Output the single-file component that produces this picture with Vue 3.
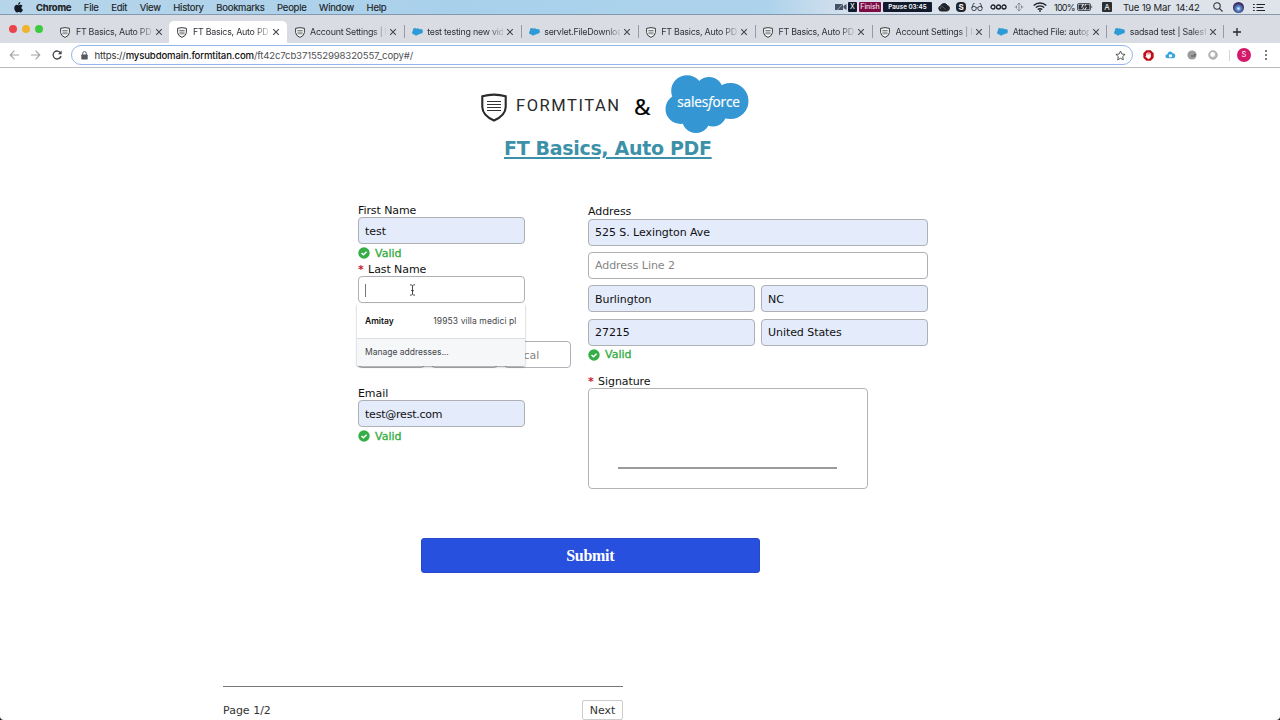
<template>
  <div class="screen">
    <header class="menubar">
      <svg class="apple" viewBox="0 0 18 22">
        <path
          d="M12.6 0c.1 1.7-.5 3-1.4 4C10.300 5 9.200 5.500 8.200 5.400 8.100 3.900 8.700 2.700 9.500 1.700 10.300.800 11.500.100 12.600 0zM9.300 6.500c.8 0 2-1.100 4-1.100 1.600 0 3 .8 3.800 2-3.400 2-2.800 6.700.8 8-.8 2.300-2.700 5.700-4.700 5.700-1.500 0-1.900-.9-3.700-.9s-2.300.9-3.700.9C3.300 21.100.500 16.500.500 12.200.500 8 3 5.500 5.700 5.500c1.600 0 2.700 1 3.600 1z"
        />
      </svg>
      <nav class="menu">
        <span v-for="item in menu" :key="item">{{ item }}</span>
      </nav>
      <div class="status">
        <svg class="camera" viewBox="0 0 12 10">
          <path d="M0 2h8v6H0zM8.500 4l3-2v6l-3-2z" fill="#465366" />
          <path d="M1 9.500L9 .5" stroke="#b8c3d2" stroke-width=".7" />
        </svg>
        <span class="badge badge-x">X</span>
        <span class="badge badge-finish">Finish</span>
        <span class="badge badge-pause">Pause 03:45</span>
        <svg class="s-cloud" viewBox="0 0 12 10">
          <path
            d="M3 9a2.600 2.600 0 0 1-.3-5.100A3.600 3.600 0 0 1 9.300 3.500 2.800 2.800 0 0 1 9 9z"
            fill="#20242c"
            stroke="#20242c"
          />
          <path d="M2.500 7c-.3-2.200 2-3 3.200-1.500l2 2" fill="none" stroke="#aab" stroke-width=".4" />
        </svg>
        <span class="skype">S</span>
        <svg class="s-glasses" viewBox="0 0 12 10">
          <g fill="none" stroke="#333946" stroke-width=".9">
            <circle cx="3" cy="6.500" r="2.200" />
            <circle cx="9" cy="6.500" r="2.200" />
            <path d="M5 6c.6-.5 1.400-.5 2 0M.8 6L2.500 1.500h1M11.200 6L9.500 1.500h-1" />
          </g>
        </svg>
        <svg class="s-dots" viewBox="0 0 17 8">
          <g fill="none" stroke="#1d2027" stroke-width="1.300">
            <circle cx="3" cy="4" r="2" />
            <circle cx="8.500" cy="4" r="2" />
            <circle cx="14" cy="4" r="2" />
          </g>
        </svg>
        <svg class="s-sync" viewBox="0 0 10 10">
          <path
            d="M5 1v8M3.500 2.500L5 1l1.500 1.500M3.500 7.500L5 9l1.500-1.500M2.500 3.500v3M7.500 3.500v3M1.200 4.400v1.200M8.800 4.400v1.200"
            fill="none"
            stroke="#85898f"
            stroke-width="1"
          />
        </svg>
        <svg class="s-wifi" viewBox="0 0 14 10">
          <g fill="none" stroke="#1f2228" stroke-width="1.400">
            <path d="M.7 3.500a9 9 0 0 1 12.600 0M2.800 5.600a6 6 0 0 1 8.400 0M4.800 7.600a3.100 3.100 0 0 1 4.400 0" />
          </g>
          <circle cx="7" cy="9" r=".9" fill="#1f2228" />
        </svg>
        <span class="percent">100%</span>
        <svg class="s-battery" viewBox="0 0 16 8">
          <rect x=".5" y=".5" width="13" height="7" rx="1.200" fill="none" stroke="#2b2d33" stroke-width=".8" />
          <path d="M1.500 1.500h4L4 4.500h2L5.500 6.500h-4zM9 1.500h3.500v5h-4L10 4H8zM14.500 2.700c1 .4 1 2.200 0 2.600z" fill="#2b2d33" />
          <path d="M8 0L5 4.500h2L6 8l3.500-4.500h-2z" fill="#2b2d33" />
        </svg>
        <span class="keyboard">A</span>
        <span class="clock">Tue 19 Mar&nbsp; 14:42</span>
        <svg class="s-search" viewBox="0 0 10 10">
          <g fill="none" stroke="#30323a" stroke-width="1.100">
            <circle cx="4" cy="4" r="3.200" />
            <path d="M6.400 6.400l3.100 3.100" />
          </g>
        </svg>
        <span class="siri"></span>
        <svg class="s-list" viewBox="0 0 12 9">
          <path d="M3.500 1.500H12M3.500 4.500h7M3.500 7.500H12M0 1.500h1.700M0 4.500h1.700M0 7.500h1.700" stroke="#1f2127" stroke-width="1.200" />
        </svg>
      </div>
    </header>

    <div class="tabstrip">
      <div class="lights"><i class="red"></i><i class="yellow"></i><i class="green"></i></div>
      <div
        v-for="(tab, index) in tabs"
        :key="index"
        class="tab"
        :class="{ active: index === 1, divided: index > 1 }"
      >
        <svg v-if="tab.icon === 'shield'" class="favicon" viewBox="0 0 26 29">
          <path d="M1.500 3.500Q13 0 24.500 3.500V15Q24 23 13 27.500 2 23 1.500 15z" fill="#fff" stroke="#33353a" stroke-width="2.600" />
          <path d="M6 9h14M6 13.500h14M6 18h14" stroke="#44474d" stroke-width="2" />
        </svg>
        <svg v-else class="favicon cloud" viewBox="0 0 84 60">
          <path :d="cloudPath" fill="#2e9bd6" />
        </svg>
        <span class="tab-title">{{ tab.title }}</span>
        <svg class="close" viewBox="0 0 8 8"><path d="M1.200 1.200l5.600 5.600M6.800 1.200L1.200 6.800" /></svg>
      </div>
      <svg class="new-tab" viewBox="0 0 10 10"><path d="M5 1v8M1 5h8" /></svg>
    </div>

    <div class="toolbar">
      <svg class="nav-icon back" viewBox="0 0 10 10"><path d="M10 5H1M5.500.7L1.200 5l4.300 4.300" /></svg>
      <svg class="nav-icon forward" viewBox="0 0 10 10"><path d="M0 5h9M4.500.7L8.800 5 4.500 9.300" /></svg>
      <svg class="nav-icon reload" viewBox="0 0 10 10">
        <path d="M8.600 3A4 4 0 1 0 9 6" />
        <path d="M9.600.5v3.700H5.900z" class="tip" />
      </svg>
      <div class="omnibox">
        <svg class="lock" viewBox="0 0 7 9">
          <rect x=".3" y="3.500" width="6.400" height="5" rx=".7" fill="#55585e" />
          <path d="M1.700 4V2.400a1.800 1.800 0 0 1 3.600 0V4" fill="none" stroke="#55585e" />
        </svg>
        <div class="url">https://<b>mysubdomain.formtitan.com</b><em>/ft42c7cb371552998320557_copy#/</em></div>
        <svg class="star" viewBox="0 0 12 12">
          <path d="M6 1.200l1.500 3.200 3.500.4-2.600 2.400.7 3.500L6 9l-3.100 1.700.7-3.500L1 4.800l3.500-.4z" fill="none" stroke="#45484d" />
        </svg>
      </div>
      <svg class="ext adblock" viewBox="0 0 12 12">
        <path d="M3.600.4h4.800l3.200 3.200v4.800l-3.200 3.200H3.600L.4 8.400V3.600z" fill="#c00d18" />
        <path d="M4 6V3.500M5.300 6V2.500M6.700 6V2.500M8 6V3.500M4 5.500h4v2.500q-2 2.500-3.500.5L3 6.800" stroke="#fff" stroke-width="1" fill="#fff" />
      </svg>
      <svg class="ext ext-cloud" viewBox="0 0 12 10">
        <path d="M2.500 8.500a2.200 2.200 0 0 1 .2-4.400A3 3 0 0 1 8.500 3a2.800 2.800 0 0 1 .7 5.500z" fill="#36a6de" />
        <rect x="4.300" y="4.500" width="3.400" height="3" rx="1" fill="#fff" />
      </svg>
      <svg class="ext ext-grey" viewBox="0 0 10 10">
        <circle cx="5" cy="5" r="4.600" fill="#9b9c9e" />
        <path d="M4 6h4M7 4l2 1" stroke="#55575b" />
      </svg>
      <svg class="ext ext-ring" viewBox="0 0 10 10">
        <circle cx="5" cy="5" r="4.200" fill="#b9babc" stroke="#98999b" stroke-width=".8" />
        <circle cx="4.600" cy="4.500" r="2.400" fill="#fff" />
      </svg>
      <span class="separator"></span>
      <span class="avatar">S</span>
      <svg class="more" viewBox="0 0 4 12">
        <g fill="#505257"><circle cx="2" cy="2" r="1" /><circle cx="2" cy="6" r="1" /><circle cx="2" cy="10" r="1" /></g>
      </svg>
    </div>

    <main class="page">
      <div class="brand">
        <svg class="shield" viewBox="0 0 26 29">
          <path d="M1.300 3.300Q13 0 24.700 3.300V14Q24.500 22.500 13 27.500 1.500 22.500 1.300 14z" fill="#fff" stroke="#2a2a2a" stroke-width="2.100" />
          <path d="M6 8.500h14M6 11.500h14M6 14.500h14M6 17.500h14" stroke="#333" stroke-width="1.200" />
        </svg>
        <span class="brand-name">FORMTITAN</span>
        <span class="amp">&amp;</span>
        <div class="salesforce">
          <svg viewBox="0 0 84 60"><path :d="cloudPath" fill="#3497d3" /></svg>
          <span>sales<i>f</i>orce</span>
        </div>
      </div>
      <h1>FT Basics, Auto PDF</h1>

      <div class="form">
        <section class="left">
          <label>First Name</label>
          <input class="field filled" value="test" />
          <p class="valid"><svg viewBox="0 0 12 12"><circle cx="6" cy="6" r="5.700" /><path d="M3.500 6l1.900 1.800 3.200-3.100" /></svg>Valid</p>
          <label><sup>*</sup> Last Name</label>
          <div class="combo">
            <div class="field empty">
              <span class="caret"></span>
              <svg class="ibeam" viewBox="0 0 7 12">
                <path d="M1 .8q2 0 2.500 1Q4 .8 6 .8M3.500 1.500v9M1 11.200q2 0 2.500-1 .5 1 2.500 1M2.200 6.500h2.600" />
              </svg>
            </div>
            <div class="autofill">
              <div class="suggestion"><b>Amitay</b><span>19953 villa medici pl</span></div>
              <div class="manage">Manage addresses...</div>
            </div>
          </div>
          <div class="phone">
            <div class="field"></div>
            <div class="field"></div>
            <input class="field" placeholder="Local" />
          </div>
          <label>Email</label>
          <input class="field filled email" value="test@rest.com" />
          <p class="valid"><svg viewBox="0 0 12 12"><circle cx="6" cy="6" r="5.700" /><path d="M3.500 6l1.900 1.800 3.200-3.100" /></svg>Valid</p>
        </section>

        <section class="right">
          <label>Address</label>
          <div class="address">
            <input class="field filled wide" value="525 S. Lexington Ave" />
            <input class="field wide" placeholder="Address Line 2" />
            <input class="field filled" value="Burlington" />
            <input class="field filled" value="NC" />
            <input class="field filled" value="27215" />
            <input class="field filled" value="United States" />
          </div>
          <p class="valid"><svg viewBox="0 0 12 12"><circle cx="6" cy="6" r="5.700" /><path d="M3.500 6l1.900 1.800 3.200-3.100" /></svg>Valid</p>
          <label class="signature-label"><sup>*</sup> Signature</label>
          <div class="signature"><span></span></div>
        </section>
      </div>

      <button class="submit">Submit</button>

      <footer class="pager">
        <span>Page 1/2</span>
        <button>Next</button>
      </footer>
    </main>
  </div>
</template>

<script setup>
const menu = ["Chrome", "File", "Edit", "View", "History", "Bookmarks", "People", "Window", "Help"];

const tabs = [
  { icon: "shield", title: "FT Basics, Auto PDF" },
  { icon: "shield", title: "FT Basics, Auto PDF" },
  { icon: "shield", title: "Account Settings | F" },
  { icon: "cloud", title: "test testing new vid" },
  { icon: "cloud", title: "servlet.FileDownloa" },
  { icon: "shield", title: "FT Basics, Auto PDF" },
  { icon: "shield", title: "FT Basics, Auto PDF" },
  { icon: "shield", title: "Account Settings | F" },
  { icon: "cloud", title: "Attached File: autop" },
  { icon: "cloud", title: "sadsad test | Salesf" },
];

// cloud built from overlapping lobes: [cx, cy, r]
const lobes = [
  [22, 16, 15.8],
  [44, 16, 14],
  [65.5, 26, 18],
  [15.5, 34, 15],
  [31, 44, 14],
  [48, 38, 13.5],
];
const cloudPath =
  lobes.map(([x, y, r]) => `M${x - r} ${y}a${r} ${r} 0 1 1 ${2 * r} 0a${r} ${r} 0 1 1 ${-2 * r} 0z`).join("") +
  "M18 16H60V42H18z";
</script>

<style>
body {
  margin: 0;
  overflow: hidden;
  background: #17181c;
}
</style>

<style scoped>
* {
  box-sizing: border-box;
}

svg {
  display: block;
  flex: none;
}

.screen {
  width: 1280px;
  height: 720px;
  overflow: hidden;
  background: #fff;
  border-radius: 0 0 4px 4px;
  font-family: Inter, "Noto Sans", sans-serif;
  color: #1c1f26;
}

/* macOS menu bar */
.menubar {
  height: 15px;
  display: flex;
  align-items: center;
  padding-left: 14px;
  background: linear-gradient(90deg, #b7d5ea 0, #a9d0eb 35%, #add3ec 60%, #dbe2ec 67%, #dfe3ea 100%);
  border-bottom: 1px solid #8499ae;
  font-size: 10px;
}

.apple {
  width: 9px;
  height: 11px;
  margin-right: 13px;
  fill: #141a24;
}

.menu {
  display: flex;
  gap: 12.600px;
  font-size: 9.500px;
  letter-spacing: -0.250px;
  white-space: nowrap;
  -webkit-text-stroke: 0.150px #1c1f26;
}

.menu span:first-child {
  font-weight: 700;
}

.status {
  display: flex;
  align-items: center;
  margin-left: auto;
  padding-right: 15px;
  white-space: nowrap;
}

.camera {
  width: 12px;
  height: 10px;
  margin-right: 1px;
}

.badge {
  height: 10px;
  line-height: 10px;
  border-radius: 1px;
  color: #fff;
  background: #111b2d;
  font-size: 7px;
  text-align: center;
}

.badge-x {
  width: 9px;
  margin-right: 2px;
}

.badge-finish {
  width: 22px;
  margin-right: 2px;
  background: #7d0b46;
}

.badge-pause {
  width: 49px;
  margin-right: 6px;
  font-size: 6.300px;
  font-weight: 600;
}

.s-cloud {
  width: 12px;
  height: 10px;
  margin-right: 6px;
}

.skype {
  width: 10px;
  height: 10px;
  margin-right: 5px;
  border-radius: 4px;
  background: #20232a;
  color: #fff;
  font-size: 8px;
  font-weight: 700;
  line-height: 10px;
  text-align: center;
}

.s-glasses {
  width: 12px;
  height: 10px;
  margin-right: 7px;
}

.s-dots {
  width: 17px;
  height: 8px;
  margin-right: 7px;
}

.s-sync {
  width: 10px;
  height: 10px;
  margin-right: 9px;
}

.s-wifi {
  width: 14px;
  height: 10px;
  margin-right: 7px;
}

.percent {
  width: 21px;
  margin-right: 2px;
  font-size: 9px;
  letter-spacing: -0.750px;
}

.s-battery {
  width: 16px;
  height: 8px;
  margin-right: 9px;
}

.keyboard {
  width: 10px;
  height: 10px;
  margin-right: 11px;
  border-radius: 1px;
  background: #2c2d31;
  color: #fff;
  font-size: 8px;
  line-height: 10px;
  text-align: center;
}

.clock {
  width: 77px;
  margin-right: 13px;
  font-size: 9.600px;
  letter-spacing: -0.200px;
}

.s-search {
  width: 10px;
  height: 10px;
  margin-right: 10px;
}

.siri {
  width: 11px;
  height: 11px;
  margin-right: 9px;
  border-radius: 50%;
  background: radial-gradient(circle at 50% 60%, #e6f1fa 0, #5a8ed0 25%, #3b2f68 60%, #20203a 100%);
}

.s-list {
  width: 12px;
  height: 9px;
}

/* browser window */
.tabstrip {
  height: 28px;
  display: flex;
  align-items: center;
  background: #dadce3;
}

.lights {
  width: 52.400px;
  display: flex;
  flex: none;
  gap: 5.400px;
  padding-left: 8.500px;
}

.lights i {
  width: 8px;
  height: 8px;
  border-radius: 50%;
}

.red {
  background: #ea444a;
}

.yellow {
  background: #efb32f;
}

.green {
  background: #3ccb3e;
}

.tab {
  position: relative;
  width: 117.100px;
  height: 22px;
  flex: none;
  display: flex;
  align-items: center;
  margin-top: 6px;
  padding: 0 6px 0 8px;
}

.tab.active {
  background: #fff;
  border-radius: 5px 5px 0 0;
}

.tab.divided::after {
  content: "";
  position: absolute;
  top: 4px;
  right: -1px;
  width: 1px;
  height: 13px;
  background: #989ba3;
}

.favicon {
  width: 10px;
  height: 11px;
  margin-right: 5.500px;
}

.favicon.cloud {
  width: 11px;
  height: 8px;
  margin-right: 4.500px;
}

.tab-title {
  width: 76px;
  color: #303238;
  font-size: 8.900px;
  line-height: 14px;
  letter-spacing: -0.250px;
  white-space: nowrap;
  -webkit-mask-image: linear-gradient(90deg, #000 62px, transparent 79px);
  mask-image: linear-gradient(90deg, #000 62px, transparent 79px);
}

.close {
  width: 8px;
  height: 8px;
  margin-left: 3px;
  fill: none;
  stroke: #44474d;
  stroke-width: 1.100;
}

.new-tab {
  width: 10px;
  height: 10px;
  margin: 6px 0 0 8.500px;
  stroke: #24262a;
  stroke-width: 1.300;
}

.toolbar {
  height: 25px;
  display: flex;
  align-items: center;
  padding-left: 9px;
  background: #fff;
  border-bottom: 1px solid #b9bbbe;
}

.nav-icon {
  width: 10px;
  height: 10px;
  fill: none;
  stroke: #9fa1a4;
  stroke-width: 1.100;
}

.back {
  margin-right: 12px;
}

.forward {
  margin-right: 11px;
}

.reload {
  stroke: #3f4247;
  stroke-width: 1.300;
}

.reload .tip {
  fill: #3f4247;
  stroke: none;
}

.omnibox {
  width: 1062px;
  height: 20px;
  display: flex;
  align-items: center;
  margin-left: 9px;
  padding: 0 6px 0 8.500px;
  border: 1.500px solid #94b4ea;
  border-radius: 10px;
}

.lock {
  width: 7px;
  height: 9px;
  margin-right: 7px;
}

.url {
  flex: 1;
  color: #303236;
  font-size: 9.600px;
  letter-spacing: -0.150px;
  white-space: nowrap;
}

.url b {
  font-weight: 500;
  color: #111;
}

.url em {
  font-style: normal;
  color: #505256;
}

.star {
  width: 11px;
  height: 11px;
}

.ext {
  width: 11px;
  height: 11px;
  margin-left: 10px;
}

.ext-cloud {
  height: 10px;
  margin-left: 11px;
}

.ext-grey,
.ext-ring {
  width: 10px;
  height: 10px;
  margin-left: 11px;
}

.separator {
  width: 1px;
  height: 11px;
  margin: 0 7px 0 11px;
  background: #d4d5d7;
}

.avatar {
  width: 14px;
  height: 14px;
  border-radius: 50%;
  background: #d5196a;
  color: #fff;
  font-size: 7.500px;
  line-height: 14px;
  text-align: center;
}

.more {
  width: 4px;
  height: 12px;
  margin-left: 13px;
}

/* form page */
.page {
  font-family: "DejaVu Sans", Verdana, sans-serif;
  color: #111;
}

.brand {
  height: 66px;
  display: flex;
  align-items: flex-start;
  padding: 7px 0 0 481px;
}

.shield {
  width: 26px;
  height: 29px;
  margin-top: 18px;
}

.brand-name {
  width: 110px;
  margin: 20px 0 0 9px;
  font-family: Roboto, sans-serif;
  font-size: 16.500px;
  line-height: 22px;
  letter-spacing: 1.550px;
  color: #2a2a2a;
}

.amp {
  width: 31px;
  margin: 16px 0 0 8px;
  font-family: "Noto Sans", sans-serif;
  font-size: 22.500px;
  line-height: 32px;
  color: #000;
  -webkit-text-stroke: 0.200px #000;
}

.salesforce {
  display: grid;
  width: 84px;
  height: 60px;
}

.salesforce svg,
.salesforce span {
  grid-area: 1 / 1;
}

.salesforce svg {
  width: 84px;
  height: 60px;
}

.salesforce span {
  padding: 16px 0 0 3px;
  color: #fff;
  font-family: "Open Sans", sans-serif;
  font-size: 13.600px;
  line-height: 21px;
  text-align: center;
  letter-spacing: -0.100px;
  -webkit-text-stroke: 0.200px #fff;
}

h1 {
  height: 30px;
  margin: 0;
  padding-left: 504px;
  color: #3c91a8;
  font-size: 19px;
  line-height: 28px;
  letter-spacing: -0.320px;
  text-decoration: underline;
  text-decoration-thickness: 2px;
  text-underline-offset: 2px;
}

.form {
  display: flex;
  gap: 17px;
  margin-top: 39px;
  padding-left: 358px;
  height: 335px;
}

.left {
  width: 213px;
}

.right {
  width: 340px;
  padding-top: 1px;
}

label {
  display: block;
  height: 14px;
  font-size: 11px;
  line-height: 16px;
  letter-spacing: -0.080px;
}

label sup {
  margin-right: 1px;
  color: #c32034;
  font-size: 11px;
  font-weight: 700;
  line-height: 0;
  vertical-align: baseline;
}

.field {
  display: block;
  width: 167px;
  height: 27px;
  padding: 1px 6px 0;
  border: 1px solid #aeb0b6;
  border-radius: 4px;
  background: #fff;
  color: #111;
  font-family: inherit;
  font-size: 11px;
  letter-spacing: -0.060px;
}

.field.filled {
  background: #e4ebfb;
}

.field.email {
  letter-spacing: -0.220px;
}

.field::placeholder {
  color: #858585;
  opacity: 1;
}

.field.empty {
  display: flex;
  align-items: center;
}

.caret {
  width: 1px;
  height: 13px;
  background: #777;
}

.ibeam {
  width: 7px;
  height: 12px;
  margin-left: 43px;
  fill: none;
  stroke: #333;
  stroke-width: 0.900;
}

.valid {
  height: 18px;
  display: flex;
  align-items: center;
  gap: 5px;
  margin: 0;
  color: #31ab40;
  font-size: 11px;
  -webkit-text-stroke: 0.300px #31ab40;
}

.valid svg {
  width: 12px;
  height: 12px;
  fill: #35ae45;
}

.valid path {
  fill: none;
  stroke: #fff;
  stroke-width: 1.500;
}

.combo {
  position: relative;
}

.autofill {
  position: absolute;
  top: 28px;
  left: -1px;
  z-index: 1;
  width: 168px;
  height: 62px;
  overflow: hidden;
  background: #fff;
  border-radius: 0 0 2px 2px;
  box-shadow: 0 1px 2px rgba(0, 0, 0, 0.4);
  font-family: Inter, sans-serif;
  font-size: 8.500px;
}

.suggestion {
  height: 34px;
  display: flex;
  align-items: center;
  justify-content: space-between;
  padding: 0 8.500px 0 8px;
}

.suggestion b {
  font-weight: 600;
}

.suggestion span {
  letter-spacing: 0.100px;
}

.suggestion span,
.manage {
  color: #44464b;
}

.manage {
  height: 28px;
  padding-left: 8px;
  border-top: 1px solid #dcdde0;
  background: #f6f7f9;
  line-height: 27px;
}

.phone {
  display: flex;
  gap: 6px;
  margin: 38px 0 18px;
}

.phone .field {
  width: 67px;
}

.address {
  display: grid;
  grid-template-columns: 167px 167px;
  gap: 6.400px 6px;
  margin-top: 0.500px;
}

.address .wide {
  grid-column: span 2;
  width: 340px;
}

.signature-label {
  margin-top: 10px;
}

.signature {
  width: 279.500px;
  height: 101px;
  padding: 78px 30px 0;
  border: 1px solid #b4b4b4;
  border-radius: 4px;
}

.signature span {
  display: block;
  width: 219px;
  height: 2px;
  margin-left: -1px;
  background: #9b9b9b;
}

.submit {
  display: block;
  width: 339.400px;
  height: 35px;
  margin-left: 421px;
  padding: 0 1px 0 0;
  border: 1px solid #2749c9;
  border-radius: 3px;
  background: #2850df;
  color: #fff;
  font: bold 16px "Liberation Serif", serif;
  letter-spacing: -0.300px;
}

.pager {
  width: 400px;
  display: flex;
  align-items: flex-start;
  justify-content: space-between;
  margin: 113px 0 0 223px;
  padding-top: 13px;
  border-top: 1px solid #777;
  color: #333;
  font-size: 11px;
  line-height: 22px;
}

.pager button {
  width: 41px;
  height: 20px;
  padding: 0;
  border: 1px solid #ccc;
  border-radius: 2px;
  background: #fff;
  color: #333;
  font-family: inherit;
  font-size: 11px;
}
</style>
